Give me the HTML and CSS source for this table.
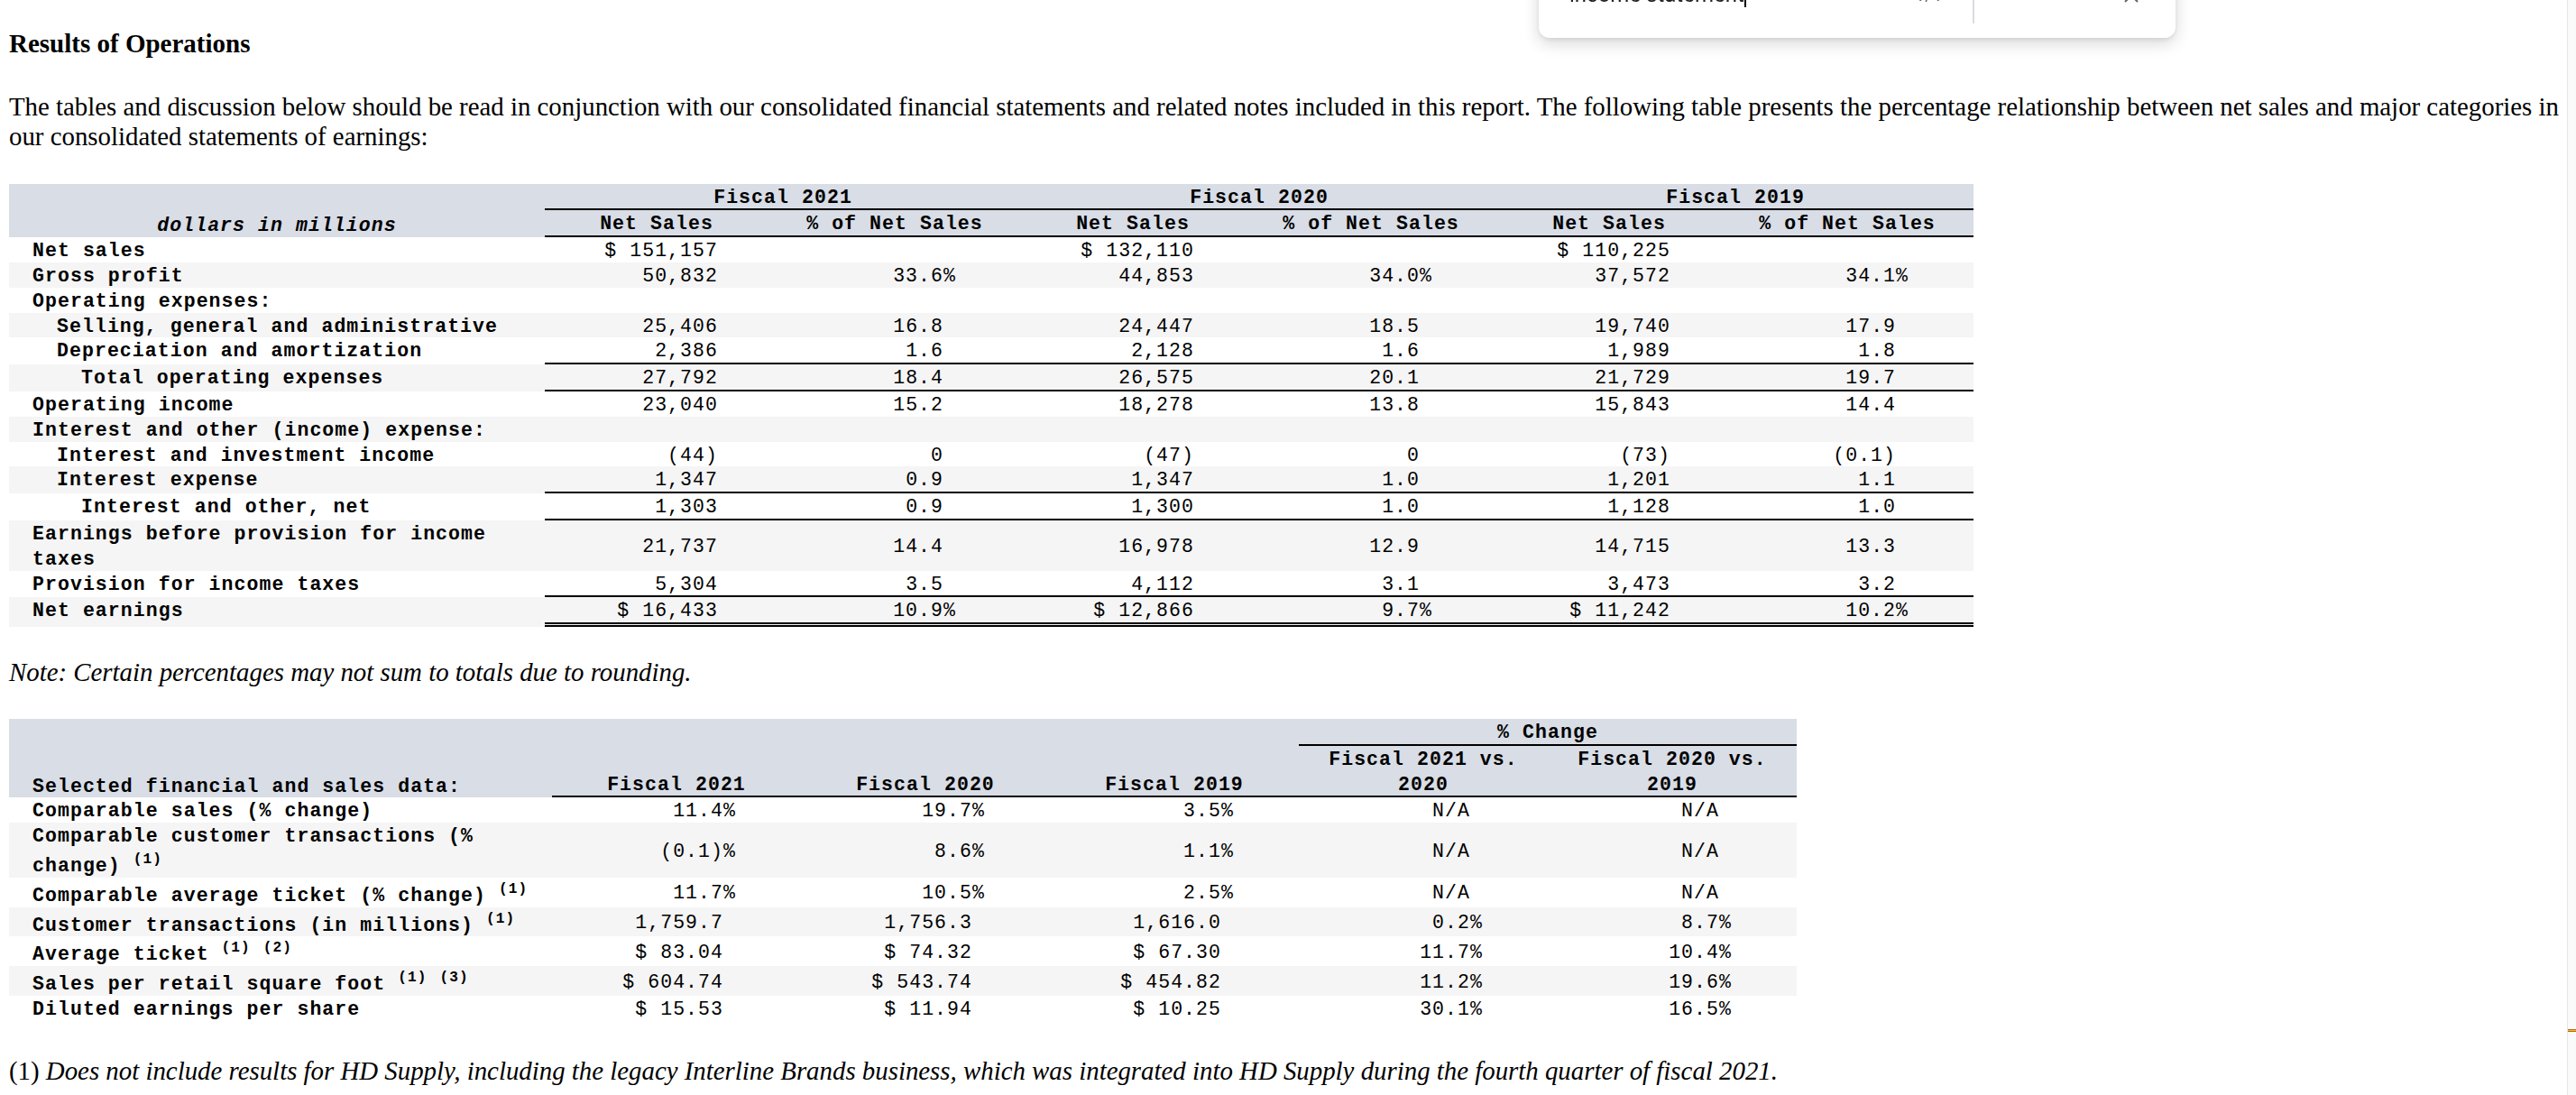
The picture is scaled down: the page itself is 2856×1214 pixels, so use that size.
FILE: index.html
```html
<!DOCTYPE html>
<html lang="en">
<head>
<meta charset="utf-8">
<title>Results of Operations</title>
<link rel="stylesheet" href="styles.css">
</head>
<body>
<main class="doc">
  <h3 class="title">Results of Operations</h3>
  <p class="lead">The tables and discussion below should be read in conjunction with our consolidated financial statements and related notes included in this report. The following table presents the percentage relationship between net sales and major categories in<br>our consolidated statements of earnings:</p>

  <table class="fin t1">
    <colgroup><col class="c-label"><col class="c-val"><col class="c-val"><col class="c-val"><col class="c-val"><col class="c-val"><col class="c-val"></colgroup>
    <thead>
      <tr>
        <th class="lbl-h" rowspan="2"><span>dollars in millions</span></th>
        <th class="grp" colspan="2"><span>Fiscal 2021</span></th>
        <th class="grp" colspan="2"><span>Fiscal 2020</span></th>
        <th class="grp" colspan="2"><span>Fiscal 2019</span></th>
      </tr>
      <tr>
        <th class="sub"><span>Net Sales</span></th><th class="sub"><span>% of Net Sales</span></th>
        <th class="sub"><span>Net Sales</span></th><th class="sub"><span>% of Net Sales</span></th>
        <th class="sub"><span>Net Sales</span></th><th class="sub"><span>% of Net Sales</span></th>
      </tr>
    </thead>
    <tbody>
      <tr><td class="lbl"><span>Net sales</span></td><td class="num"><span>$ 151,157</span></td><td class="num"></td><td class="num"><span>$ 132,110</span></td><td class="num"></td><td class="num"><span>$ 110,225</span></td><td class="num"></td></tr>
      <tr><td class="lbl"><span>Gross profit</span></td><td class="num"><span>50,832</span></td><td class="num"><span>33.6%</span></td><td class="num"><span>44,853</span></td><td class="num"><span>34.0%</span></td><td class="num"><span>37,572</span></td><td class="num"><span>34.1%</span></td></tr>
      <tr><td class="lbl"><span>Operating expenses:</span></td><td class="num"></td><td class="num"></td><td class="num"></td><td class="num"></td><td class="num"></td><td class="num"></td></tr>
      <tr><td class="lbl i1"><span>Selling, general and administrative</span></td><td class="num"><span>25,406</span></td><td class="num sp"><span>16.8</span></td><td class="num"><span>24,447</span></td><td class="num sp"><span>18.5</span></td><td class="num"><span>19,740</span></td><td class="num sp"><span>17.9</span></td></tr>
      <tr class="bb"><td class="lbl i1"><span>Depreciation and amortization</span></td><td class="num"><span>2,386</span></td><td class="num sp"><span>1.6</span></td><td class="num"><span>2,128</span></td><td class="num sp"><span>1.6</span></td><td class="num"><span>1,989</span></td><td class="num sp"><span>1.8</span></td></tr>
      <tr class="bb"><td class="lbl i2"><span>Total operating expenses</span></td><td class="num"><span>27,792</span></td><td class="num sp"><span>18.4</span></td><td class="num"><span>26,575</span></td><td class="num sp"><span>20.1</span></td><td class="num"><span>21,729</span></td><td class="num sp"><span>19.7</span></td></tr>
      <tr><td class="lbl"><span>Operating income</span></td><td class="num"><span>23,040</span></td><td class="num sp"><span>15.2</span></td><td class="num"><span>18,278</span></td><td class="num sp"><span>13.8</span></td><td class="num"><span>15,843</span></td><td class="num sp"><span>14.4</span></td></tr>
      <tr><td class="lbl"><span>Interest and other (income) expense:</span></td><td class="num"></td><td class="num"></td><td class="num"></td><td class="num"></td><td class="num"></td><td class="num"></td></tr>
      <tr><td class="lbl i1"><span>Interest and investment income</span></td><td class="num"><span>(44)</span></td><td class="num sp"><span>0</span></td><td class="num"><span>(47)</span></td><td class="num sp"><span>0</span></td><td class="num"><span>(73)</span></td><td class="num sp"><span>(0.1)</span></td></tr>
      <tr class="bb"><td class="lbl i1"><span>Interest expense</span></td><td class="num"><span>1,347</span></td><td class="num sp"><span>0.9</span></td><td class="num"><span>1,347</span></td><td class="num sp"><span>1.0</span></td><td class="num"><span>1,201</span></td><td class="num sp"><span>1.1</span></td></tr>
      <tr class="bb"><td class="lbl i2"><span>Interest and other, net</span></td><td class="num"><span>1,303</span></td><td class="num sp"><span>0.9</span></td><td class="num"><span>1,300</span></td><td class="num sp"><span>1.0</span></td><td class="num"><span>1,128</span></td><td class="num sp"><span>1.0</span></td></tr>
      <tr><td class="lbl"><span>Earnings before provision for income taxes</span></td><td class="num"><span>21,737</span></td><td class="num sp"><span>14.4</span></td><td class="num"><span>16,978</span></td><td class="num sp"><span>12.9</span></td><td class="num"><span>14,715</span></td><td class="num sp"><span>13.3</span></td></tr>
      <tr class="bb"><td class="lbl"><span>Provision for income taxes</span></td><td class="num"><span>5,304</span></td><td class="num sp"><span>3.5</span></td><td class="num"><span>4,112</span></td><td class="num sp"><span>3.1</span></td><td class="num"><span>3,473</span></td><td class="num sp"><span>3.2</span></td></tr>
      <tr class="dbl"><td class="lbl"><span>Net earnings</span></td><td class="num"><span>$ 16,433</span></td><td class="num"><span>10.9%</span></td><td class="num"><span>$ 12,866</span></td><td class="num"><span>9.7%</span></td><td class="num"><span>$ 11,242</span></td><td class="num"><span>10.2%</span></td></tr>
    </tbody>
  </table>

  <p class="note"><em>Note: Certain percentages may not sum to totals due to rounding.</em></p>

  <table class="fin t2">
    <colgroup><col class="c-label2"><col class="c-val2"><col class="c-val2"><col class="c-val2"><col class="c-val2"><col class="c-val2"></colgroup>
    <thead>
      <tr>
        <th class="lbl-h2" rowspan="2"><span>Selected financial and sales data:</span></th>
        <th class="yr" rowspan="2"><span>Fiscal 2021</span></th>
        <th class="yr" rowspan="2"><span>Fiscal 2020</span></th>
        <th class="yr" rowspan="2"><span>Fiscal 2019</span></th>
        <th class="grp" colspan="2"><span>% Change</span></th>
      </tr>
      <tr>
        <th class="yr"><span>Fiscal 2021 vs.<br>2020</span></th>
        <th class="yr"><span>Fiscal 2020 vs.<br>2019</span></th>
      </tr>
    </thead>
    <tbody>
      <tr><td class="lbl"><span>Comparable sales (% change)</span></td><td class="num"><span>11.4%</span></td><td class="num"><span>19.7%</span></td><td class="num"><span>3.5%</span></td><td class="num sp"><span>N/A</span></td><td class="num sp"><span>N/A</span></td></tr>
      <tr><td class="lbl"><span>Comparable customer transactions (% change) <sup>(1)</sup></span></td><td class="num"><span>(0.1)%</span></td><td class="num"><span>8.6%</span></td><td class="num"><span>1.1%</span></td><td class="num sp"><span>N/A</span></td><td class="num sp"><span>N/A</span></td></tr>
      <tr><td class="lbl"><span>Comparable average ticket (% change) <sup>(1)</sup></span></td><td class="num"><span>11.7%</span></td><td class="num"><span>10.5%</span></td><td class="num"><span>2.5%</span></td><td class="num sp"><span>N/A</span></td><td class="num sp"><span>N/A</span></td></tr>
      <tr><td class="lbl"><span>Customer transactions (in millions) <sup>(1)</sup></span></td><td class="num sp"><span>1,759.7</span></td><td class="num sp"><span>1,756.3</span></td><td class="num sp"><span>1,616.0</span></td><td class="num"><span>0.2%</span></td><td class="num"><span>8.7%</span></td></tr>
      <tr><td class="lbl"><span>Average ticket <sup>(1)</sup> <sup>(2)</sup></span></td><td class="num sp"><span>$ 83.04</span></td><td class="num sp"><span>$ 74.32</span></td><td class="num sp"><span>$ 67.30</span></td><td class="num"><span>11.7%</span></td><td class="num"><span>10.4%</span></td></tr>
      <tr><td class="lbl"><span>Sales per retail square foot <sup>(1)</sup> <sup>(3)</sup></span></td><td class="num sp"><span>$ 604.74</span></td><td class="num sp"><span>$ 543.74</span></td><td class="num sp"><span>$ 454.82</span></td><td class="num"><span>11.2%</span></td><td class="num"><span>19.6%</span></td></tr>
      <tr><td class="lbl"><span>Diluted earnings per share</span></td><td class="num sp"><span>$ 15.53</span></td><td class="num sp"><span>$ 11.94</span></td><td class="num sp"><span>$ 10.25</span></td><td class="num"><span>30.1%</span></td><td class="num"><span>16.5%</span></td></tr>
    </tbody>
  </table>

  <p class="foot">(1) <em>Does not include results for HD Supply, including the legacy Interline Brands business, which was integrated into HD Supply during the fourth quarter of fiscal 2021.</em></p>
</main>

<div class="findbar">
  <div class="fb-row">
    <div class="fb-field"><span class="fb-text">income statement</span><span class="caret"></span></div>
    <div class="fb-count">1/1</div>
    <div class="fb-btns">
      <span class="fb-btn"><svg viewBox="0 0 20 20" width="20" height="20"><path d="M5 12.5 10 7.5 15 12.5" fill="none" stroke="#5f6368" stroke-width="2"/></svg></span>
      <span class="fb-btn"><svg viewBox="0 0 20 20" width="20" height="20"><path d="M5 7.5 10 12.5 15 7.5" fill="none" stroke="#5f6368" stroke-width="2"/></svg></span>
      <span class="fb-btn"><svg viewBox="0 0 18 18" width="18" height="18"><path d="M2 2 16 16M16 2 2 16" fill="none" stroke="#5f6368" stroke-width="2"/></svg></span>
    </div>
  </div>
  <div class="fb-sep"></div>
</div>

<div class="scrolltrack"><div class="marker"></div></div>
</body>
</html>
```

FILE: styles.css
```css
html, body {
  margin: 0;
  padding: 0;
  background: #fff;
  overflow: hidden;
}

body {
  font-family: "Liberation Serif", "Times New Roman", serif;
  color: #000;
}

.doc {
  padding: 32px 4px 0 10px;
}

.title {
  font-size: 29px;
  line-height: 33px;
  font-weight: bold;
  margin: 0;
}

.lead {
  font-size: 28.85px;
  line-height: 32.8px;
  margin: 37px 0 36px;
}

.note {
  font-size: 28.85px;
  line-height: 32.8px;
  margin: 34px 0 35px;
}

.foot {
  font-size: 28.85px;
  line-height: 32.8px;
  margin: 39px 0 0;
}

/* financial tables */
.fin {
  border-collapse: separate;
  border-spacing: 0;
  table-layout: fixed;
  font-family: "Liberation Mono", "Courier New", monospace;
  font-size: 21.5px;
  letter-spacing: 1.07px;
  line-height: 27.8px;
}

.fin th > span,
.fin td > span {
  line-height: 20px;
  vertical-align: -2px;
}

.t1 { width: 2178px; }
.t1 .c-label { width: 594px; }
.t1 .c-val { width: 264px; }

.t2 { width: 1982px; }
.t2 .c-label2 { width: 602px; }
.t2 .c-val2 { width: 276px; }

.fin th,
.fin td {
  padding: 0;
  vertical-align: middle;
}

.fin thead th {
  background: #d8dde6;
  font-weight: bold;
  text-align: center;
  white-space: nowrap;
}

.fin .lbl-h {
  font-style: italic;
  vertical-align: bottom;
}

.fin .lbl-h2 {
  text-align: left;
  padding-left: 26px;
  vertical-align: bottom;
}

.fin .grp {
  border-bottom: 2px solid #000;
}

.fin .sub {
  padding-right: 16px;
  border-bottom: 2px solid #000;
}

.fin .yr {
  vertical-align: bottom;
  border-bottom: 2px solid #000;
}

.fin .lbl {
  font-weight: bold;
  text-align: left;
  padding-left: 26px;
  vertical-align: top;
}

.fin .lbl.i1 { padding-left: 53px; }
.fin .lbl.i2 { padding-left: 80px; }

.fin .num {
  text-align: right;
  padding-right: 72px;
  white-space: nowrap;
}

.fin .num.sp {
  padding-right: 85.97px;
}

.fin tbody tr:nth-child(even) td {
  background: #f5f5f5;
}

.fin tr.bb td.num {
  border-bottom: 2px solid #000;
}

.fin tr.dbl td.num {
  border-bottom: 5px double #000;
}

.fin sup {
  font-size: 0.75em;
  line-height: 26.6px;
  vertical-align: 9px;
}

/* browser find bar overlay */
.findbar {
  position: fixed;
  left: 1706px;
  top: -40px;
  width: 706px;
  height: 82px;
  box-sizing: border-box;
  padding-top: 14px;
  background: #fff;
  border-radius: 0 0 12px 12px;
  box-shadow: 0 6px 18px rgba(0, 0, 0, 0.16), 0 2px 5px rgba(0, 0, 0, 0.08);
  font-family: Roboto, "Noto Sans", sans-serif;
}

.fb-row {
  display: flex;
  align-items: center;
  height: 41px;
}

.fb-field {
  width: 383px;
  padding-left: 34px;
  font-size: 24px;
  line-height: 41px;
  color: #202124;
  white-space: nowrap;
}

.caret {
  display: inline-block;
  width: 2px;
  height: 30px;
  background: #000;
  vertical-align: -6px;
}

.fb-count {
  width: 27px;
  text-align: right;
  font-size: 20px;
  line-height: 41px;
  color: #5f6368;
}

.fb-btns {
  margin-left: auto;
  padding-right: 25px;
  display: flex;
  align-items: center;
}

.fb-btn {
  width: 48px;
  height: 41px;
  display: flex;
  align-items: center;
  justify-content: center;
}

.fb-sep {
  position: absolute;
  left: 481px;
  top: 0;
  width: 2px;
  height: 66px;
  background: #dadce0;
}

/* scrollbar track with find marker */
.scrolltrack {
  position: fixed;
  top: 0;
  right: 0;
  bottom: 0;
  width: 9px;
  background: #fafafa;
  border-left: 1px solid #e6e6e6;
}

.marker {
  position: absolute;
  left: 0;
  right: 0;
  top: 1141px;
  height: 1px;
  background: #f2c21b;
  border-top: 1px solid #b5651d;
  border-bottom: 1px solid #b5651d;
}
```
